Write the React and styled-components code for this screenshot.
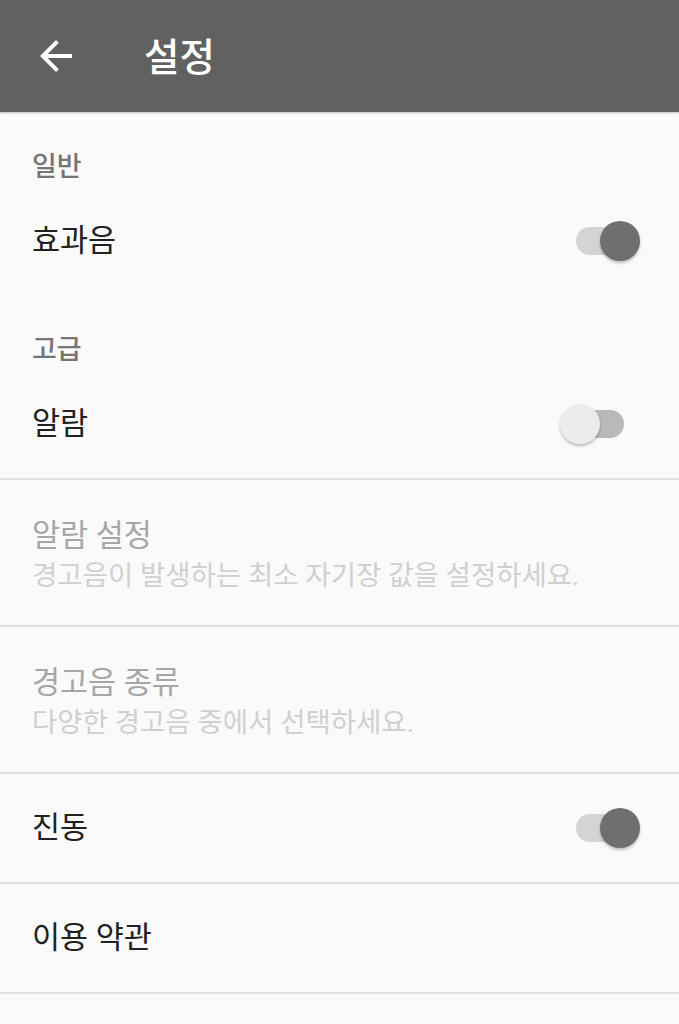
import styled, { createGlobalStyle } from "styled-components";

const GlobalStyle = createGlobalStyle`
  html, body {
    margin: 0;
    padding: 0;
    background: #fafafa;
    font-family: Roboto, "Noto Sans CJK KR", sans-serif;
  }
`;

const Switch = ({ on }) => (
  <SwitchBox>
    <Track $on={on} />
    <Thumb $on={on} />
  </SwitchBox>
);

const App = () => {
  return (
    <Page>
      <GlobalStyle />
      <Toolbar>
        <BackButton>
          <svg width="48" height="48" viewBox="0 0 24 24">
            <path
              fill="#fff"
              d="M20 11H7.83l5.59-5.59L12 4l-8 8 8 8 1.41-1.41L7.83 13H20v-2z"
            />
          </svg>
        </BackButton>
        <Title>설정</Title>
      </Toolbar>

      <Category>일반</Category>
      <Row>
        <Label>효과음</Label>
        <Switch on />
      </Row>

      <Category>고급</Category>
      <Row $divider>
        <Label>알람</Label>
        <Switch />
      </Row>

      <TwoLineRow $divider>
        <Label $disabled>알람 설정</Label>
        <Summary>경고음이 발생하는 최소 자기장 값을 설정하세요.</Summary>
      </TwoLineRow>
      <TwoLineRow $divider>
        <Label $disabled>경고음 종류</Label>
        <Summary>다양한 경고음 중에서 선택하세요.</Summary>
      </TwoLineRow>

      <Row $divider>
        <Label>진동</Label>
        <Switch on />
      </Row>
      <Row $divider>
        <Label>이용 약관</Label>
      </Row>
    </Page>
  );
};
export default App;

const Page = styled.div`
  min-height: 1024px;
  background: #fafafa;
`;
const Toolbar = styled.header`
  height: 112px;
  background: #616161;
  display: flex;
  align-items: center;
  box-shadow: 0 1px 2px rgba(0, 0, 0, 0.25);
  position: relative;
`;
const BackButton = styled.div`
  width: 48px;
  height: 48px;
  margin-left: 32px;
  display: flex;
`;
const Title = styled.h1`
  margin: 4px 0 0 64px;
  font-size: 38.5px;
  font-weight: 500;
  color: #fff;
  line-height: 48px;
`;
const Category = styled.div`
  padding: 40px 32px 5px;
  line-height: 30px;
  font-size: 27px;
  font-weight: 500;
  color: #757575;
`;
const Row = styled.div`
  height: 108px;
  padding: 0 39px 0 32px;
  display: flex;
  align-items: center;
  justify-content: space-between;
  border-bottom: ${(p) => (p.$divider ? "2px solid #e0e0e0" : "none")};
`;
const TwoLineRow = styled.div`
  padding: 36px 32px 29px;
  display: flex;
  flex-direction: column;
  border-bottom: ${(p) => (p.$divider ? "2px solid #e0e0e0" : "none")};
`;
const Label = styled.div`
  font-size: 30.5px;
  line-height: 40px;
  color: ${(p) => (p.$disabled ? "#a6a6a6" : "#212121")};
`;
const Summary = styled.div`
  font-size: 27.5px;
  line-height: 40px;
  color: #d0d0d0;
`;
const SwitchBox = styled.div`
  position: relative;
  width: 80px;
  height: 40px;
  display: flex;
  align-items: center;
  justify-content: center;
`;
const Track = styled.div`
  width: 48px;
  height: 28px;
  border-radius: 14px;
  background: ${(p) => (p.$on ? "#d4d4d4" : "#b9b9b9")};
`;
const Thumb = styled.div`
  position: absolute;
  top: 0;
  left: ${(p) => (p.$on ? "40px" : "0")};
  width: 40px;
  height: 40px;
  border-radius: 50%;
  background: ${(p) => (p.$on ? "#6f6f6f" : "#ececec")};
  box-shadow: 0 2px 3px rgba(0, 0, 0, 0.25);
`;
